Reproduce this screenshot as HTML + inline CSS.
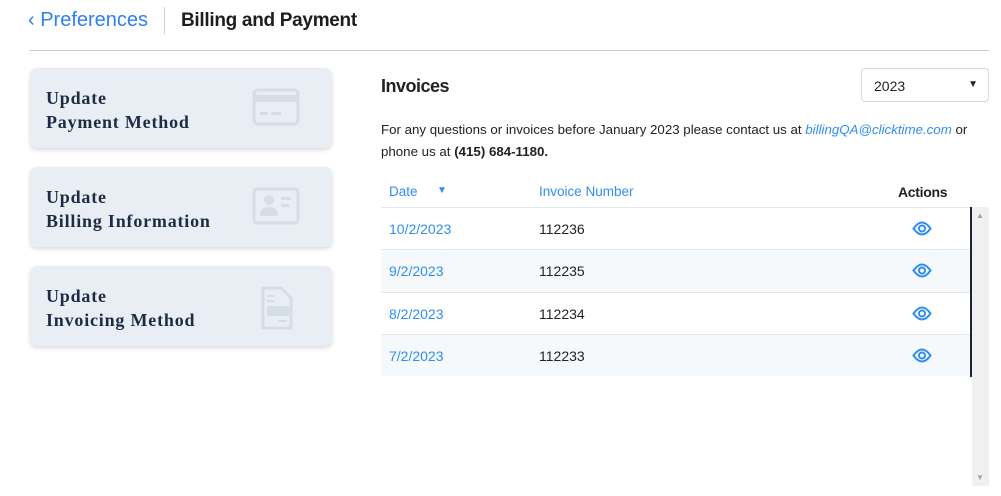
<!DOCTYPE html>
<html><head><style>
*{box-sizing:border-box;margin:0;padding:0}
body{width:1001px;height:496px;background:#fff;font-family:"Liberation Sans",sans-serif;position:relative;overflow:hidden;color:#222}
.a{position:absolute}
.card{position:absolute;left:30px;width:302px;height:80px;background:#e9eef5;border-radius:7px;box-shadow:0 2px 4px rgba(0,0,0,.15)}
.card .t{position:absolute;left:16px;top:18px;font-family:"Liberation Serif",serif;font-weight:bold;font-size:18px;line-height:24px;color:#1d2c44;letter-spacing:0.8px}
.card svg{position:absolute;left:222px;top:20px}
.row{position:absolute;left:381px;width:590px;height:42px;border-top:1px solid #e1e7ec;font-size:14px}
.row .d{position:absolute;left:8px;top:13px;color:#2f8ff0}
.row .n{position:absolute;left:158px;top:13px;color:#222}
.row svg{position:absolute;left:531px;top:13px}
</style></head><body>
<div class="a" style="left:28px;top:9px;font-size:20px;color:#2f80ed">&#8249; Preferences</div>
<div class="a" style="left:164px;top:7px;width:1px;height:27px;background:#c8d2da"></div>
<div class="a" style="left:181px;top:10px;font-size:19px;color:#1d1d1d;font-weight:bold;letter-spacing:-0.3px">Billing and Payment</div>
<div class="a" style="left:29px;top:50px;width:960px;height:1px;background:#c3d0da"></div>

<div class="card" style="top:68px"><div class="t">Update<br>Payment Method</div>
<svg width="48" height="38" viewBox="0 0 48 38"><rect x="2" y="2" width="44" height="34" rx="4" fill="none" stroke="#d6dee5" stroke-width="3"/><rect x="2" y="7" width="44" height="7" fill="#d6dee5"/><rect x="8" y="24" width="8" height="3" fill="#d6dee5"/><rect x="19" y="24" width="10" height="3" fill="#d6dee5"/></svg></div>
<div class="card" style="top:167px"><div class="t">Update<br>Billing Information</div>
<svg width="48" height="38" viewBox="0 0 48 38"><rect x="2" y="2" width="44" height="34" rx="3" fill="none" stroke="#d6dee5" stroke-width="3"/><circle cx="17" cy="13" r="5" fill="#d6dee5"/><path d="M8 29q0-9 9-9q9 0 9 9z" fill="#d6dee5"/><rect x="29" y="10" width="10" height="3" fill="#d6dee5"/><rect x="29" y="17" width="8" height="3" fill="#d6dee5"/></svg></div>
<div class="card" style="top:266px"><div class="t">Update<br>Invoicing Method</div>
<svg width="48" height="44" viewBox="0 0 48 44"><path d="M11 2h18l10 10v30H11z" fill="none" stroke="#d6dee5" stroke-width="3"/><rect x="15" y="9" width="8" height="2" fill="#d6dee5"/><rect x="15" y="14" width="8" height="2" fill="#d6dee5"/><rect x="15" y="20" width="22" height="10" rx="1" fill="#d6dee5"/><rect x="26" y="34" width="9" height="2" fill="#d6dee5"/></svg></div>

<div class="a" style="left:381px;top:76px;font-size:18px;color:#222;font-weight:bold;letter-spacing:-0.5px">Invoices</div>
<div class="a" style="left:861px;top:68px;width:128px;height:34px;border:1px solid #d3dae0;border-radius:4px;font-size:14px;padding:9px 0 0 12px">2023<span style="position:absolute;right:10px;top:10px;font-size:10px">&#9660;</span></div>
<div class="a" style="left:381px;top:119px;font-size:13.3px;line-height:22px;color:#222;width:610px">For any questions or invoices before January 2023 please contact us at <i style="color:#2f8ff0">billingQA@clicktime.com</i> or<br>phone us at <b>(415) 684-1180.</b></div>

<div class="a" style="left:389px;top:184px;font-size:13.5px;color:#2f8ff0">Date</div>
<div class="a" style="left:437px;top:185px;font-size:10px;color:#2f8ff0">&#9660;</div>
<div class="a" style="left:539px;top:184px;font-size:13.5px;color:#2f8ff0">Invoice Number</div>
<div class="a" style="left:898px;top:184px;font-size:14px;color:#222;font-weight:bold;letter-spacing:-0.3px">Actions</div>

<div class="row" style="top:207px;background:#fff"><span class="d">10/2/2023</span><span class="n">112236</span><svg width="20" height="15" viewBox="0 0 20 15"><path d="M1.5 7.5q8.5-12 17 0q-8.5 12-17 0z" fill="none" stroke="#2f8ff0" stroke-width="2"/><circle cx="10" cy="7.5" r="3" fill="none" stroke="#2f8ff0" stroke-width="2"/></svg></div>
<div class="row" style="top:249px;background:#f5f9fb;height:43px"><span class="d">9/2/2023</span><span class="n">112235</span><svg width="20" height="15" viewBox="0 0 20 15"><path d="M1.5 7.5q8.5-12 17 0q-8.5 12-17 0z" fill="none" stroke="#2f8ff0" stroke-width="2"/><circle cx="10" cy="7.5" r="3" fill="none" stroke="#2f8ff0" stroke-width="2"/></svg></div>
<div class="row" style="top:292px;background:#fff"><span class="d">8/2/2023</span><span class="n">112234</span><svg width="20" height="15" viewBox="0 0 20 15"><path d="M1.5 7.5q8.5-12 17 0q-8.5 12-17 0z" fill="none" stroke="#2f8ff0" stroke-width="2"/><circle cx="10" cy="7.5" r="3" fill="none" stroke="#2f8ff0" stroke-width="2"/></svg></div>
<div class="row" style="top:334px;background:#f5f9fb"><span class="d">7/2/2023</span><span class="n">112233</span><svg width="20" height="15" viewBox="0 0 20 15"><path d="M1.5 7.5q8.5-12 17 0q-8.5 12-17 0z" fill="none" stroke="#2f8ff0" stroke-width="2"/><circle cx="10" cy="7.5" r="3" fill="none" stroke="#2f8ff0" stroke-width="2"/></svg></div>

<div class="a" style="left:970px;top:207px;width:2px;height:170px;background:#1d2535"></div>
<div class="a" style="left:972px;top:207px;width:17px;height:279px;background:#f0f0f0"></div>
<div class="a" style="left:976px;top:211px;font-size:8px;color:#a3a3a3">&#9650;</div>
<div class="a" style="left:976px;top:473px;font-size:8px;color:#a3a3a3">&#9660;</div>
</body></html>
